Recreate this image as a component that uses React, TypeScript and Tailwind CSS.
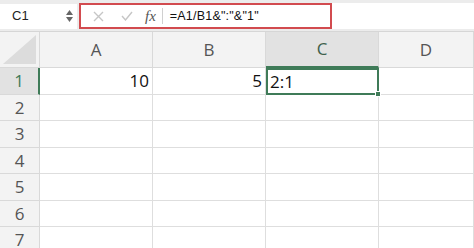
import React from "react";

const cols = ["A", "B", "C", "D"];
const rows = [1, 2, 3, 4, 5, 6, 7];

const App = () => {
  return (
    <div className="w-[474px] h-[248px] overflow-hidden bg-white font-['Open_Sans',sans-serif]">
      {/* formula bar */}
      <div className="h-[32px] bg-[#ececec] border-b border-[#d6d6d6] flex items-center pt-[1px]">
        <div className="w-[77px] h-[25px] bg-white flex items-center justify-between pl-[12px] pr-[4px]">
          <span className="text-[13px] text-[#222] font-['Liberation_Sans',sans-serif]">C1</span>
          <div className="flex flex-col gap-[2px] items-center">
            <svg width="7" height="5" viewBox="0 0 7 5"><path d="M3.5 0 L7 5 L0 5 Z" fill="#666" /></svg>
            <svg width="7" height="5" viewBox="0 0 7 5"><path d="M0 0 L7 0 L3.5 5 Z" fill="#666" /></svg>
          </div>
        </div>
        <div className="ml-[2px] flex-1 h-[26px] bg-white flex items-center">
          <div className="w-[253px] h-full border-2 border-[#d24b4f] flex items-center">
            <svg className="ml-[12px]" width="11" height="11" viewBox="0 0 11 11"><path d="M1 1 L10 10 M10 1 L1 10" stroke="#c6c6c6" strokeWidth="1.4" /></svg>
            <svg className="ml-[17px]" width="12" height="10" viewBox="0 0 12 10"><path d="M1 5 L4.5 9 L11 1" stroke="#c6c6c6" strokeWidth="1.4" fill="none" /></svg>
            <span className="ml-[12px] text-[15px] italic text-[#555] font-['Liberation_Serif',serif]">fx</span>
            <div className="ml-[6px] w-px h-[16px] bg-[#d0d0d0]" />
            <span className="ml-[7px] text-[12.5px] text-[#111] font-['Liberation_Sans',sans-serif] tracking-[0.2px]">=A1/B1&amp;":"&amp;"1"</span>
          </div>
        </div>
      </div>
      {/* grid */}
      <div className="grid grid-cols-[40px_113px_113px_113px_95px] grid-rows-[36px_repeat(7,26.5px)]">
        <div className="bg-[#f3f3f3] border-r border-b border-[#d9d9d9] flex items-end justify-end p-[3px] pr-[3px]">
          <svg width="33" height="29" viewBox="0 0 33 29"><path d="M33 0 L33 29 L0 29 Z" fill="#dcdcdc" /></svg>
        </div>
        {cols.map((c) => (
          <div
            key={c}
            className={
              c === "C"
                ? "bg-[#e2e2e2] border-r border-[#d9d9d9] border-b-2 border-b-[#3f7b58] flex items-center justify-center text-[17px] text-[#3f5f4c]"
                : "bg-[#f3f3f3] border-r border-b border-[#d9d9d9] flex items-center justify-center text-[17px] text-[#555]"
            }
          >
            {c}
          </div>
        ))}
        {rows.map((r) => (
          <React.Fragment key={r}>
            <div
              className={
                r === 1
                  ? "bg-[#e2e2e2] border-r-2 border-r-[#3f7b58] border-b border-[#d9d9d9] flex items-center justify-center text-[17px] text-[#3f7b58]"
                  : "bg-[#f3f3f3] border-r border-b border-[#d9d9d9] flex items-center justify-center text-[17px] text-[#555]"
              }
            >
              {r}
            </div>
            {cols.map((c) => {
              const sel = r === 1 && c === "C";
              let val = "";
              if (r === 1 && c === "A") val = "10";
              if (r === 1 && c === "B") val = "5";
              if (sel) val = "2:1";
              return (
                <div
                  key={c}
                  className={
                    sel
                      ? "relative border-2 border-[#3f7b58] flex items-center pl-[2px] text-[17px] text-[#111]"
                      : "border-r border-b border-[#dedede] flex items-center justify-end pr-[3px] text-[17px] text-[#111]"
                  }
                >
                  {val}
                  {sel && <div className="absolute right-[-4px] bottom-[-4px] w-[6px] h-[6px] bg-[#3f7b58] border border-white" />}
                </div>
              );
            })}
          </React.Fragment>
        ))}
      </div>
    </div>
  );
};

export default App;
